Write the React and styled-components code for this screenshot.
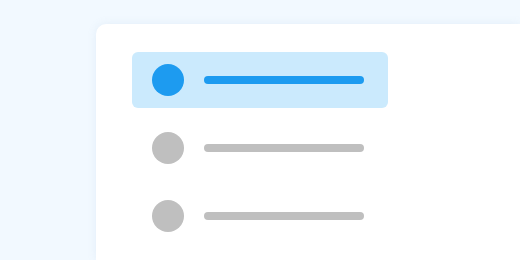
import styled, { createGlobalStyle } from "styled-components";

const GlobalStyle = createGlobalStyle`
  html, body {
    margin: 0;
    padding: 0;
    width: 520px;
    height: 260px;
    overflow: hidden;
    background: #f2f9ff;
    font-family: "Inter", sans-serif;
  }
`;

const Page = styled.div`
  padding: 24px 0 0 96px;
  box-sizing: border-box;
  width: 520px;
  height: 260px;
  overflow: hidden;
`;

/* the card runs on past the right and bottom edges, so only its top-left corner is rounded */
const Card = styled.div`
  width: 100%;
  height: 100%;
  background: #ffffff;
  border-top-left-radius: 10px;
  box-shadow: 0 0 10px rgba(120, 160, 200, 0.12);
  padding: 28px 0 0 36px;
  box-sizing: border-box;
  display: flex;
  flex-direction: column;
  gap: 12px;
`;

const Row = styled.div`
  width: 256px;
  height: 56px;
  flex-shrink: 0;
  box-sizing: border-box;
  padding: 0 24px 0 20px;
  display: flex;
  align-items: center;
  gap: 20px;
  border-radius: 6px;
  background: ${(p) => (p.$active ? "#cbeafd" : "transparent")};
`;

const Dot = styled.div`
  width: 32px;
  height: 32px;
  border-radius: 50%;
  flex-shrink: 0;
  background: ${(p) => (p.$active ? "#1d9bf0" : "#bfbfbf")};
`;

const Bar = styled.div`
  width: 160px;
  height: 8px;
  border-radius: 4px;
  background: ${(p) => (p.$active ? "#1d9bf0" : "#bfbfbf")};
`;

const items = [true, false, false];

export default function App() {
  return (
    <>
      <GlobalStyle />
      <Page>
        <Card>
          {items.map((active, i) => (
            <Row key={i} $active={active}>
              <Dot $active={active} />
              <Bar $active={active} />
            </Row>
          ))}
        </Card>
      </Page>
    </>
  );
}
